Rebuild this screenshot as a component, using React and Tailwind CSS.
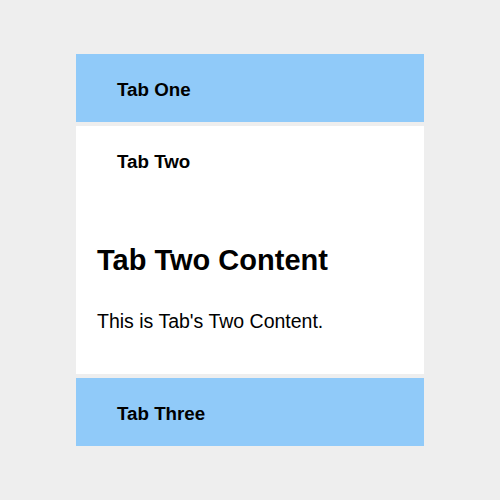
import { useState } from 'react';

const TABS = [
  { id: 'one', label: 'Tab One', title: 'Tab One Content', body: "This is Tab's One Content." },
  { id: 'two', label: 'Tab Two', title: 'Tab Two Content', body: "This is Tab's Two Content." },
  { id: 'three', label: 'Tab Three', title: 'Tab Three Content', body: "This is Tab's Three Content." },
];

function Tab({ tab, open, onToggle }) {
  if (!open) {
    return (
      <button
        type="button"
        onClick={onToggle}
        className="block w-full text-left bg-[#90caf9] pl-[41px] pt-[26px] pb-[22px] text-[18.75px] leading-[20px] font-bold text-black"
      >
        {tab.label}
      </button>
    );
  }

  return (
    <div className="bg-white">
      <button
        type="button"
        onClick={onToggle}
        className="block w-full text-left pl-[41px] pt-[26px] pb-[22px] text-[18.75px] leading-[20px] font-bold text-black"
      >
        {tab.label}
      </button>
      <div className="px-[21px] pt-[50px] pb-[43px]">
        <h2 className="text-[29px] leading-[32px] font-bold text-black">{tab.title}</h2>
        <p className="mt-[35px] text-[19.5px] leading-[20px] text-black">{tab.body}</p>
      </div>
    </div>
  );
}

export default function App() {
  const [active, setActive] = useState('two');

  return (
    <div
      className="h-[500px] flex items-center justify-center bg-[#eeeeee]"
      style={{ fontFamily: '"Liberation Sans", Arial, sans-serif' }}
    >
      <div className="w-[348px] flex flex-col gap-1">
        {TABS.map((tab) => (
          <Tab
            key={tab.id}
            tab={tab}
            open={active === tab.id}
            onToggle={() => setActive(active === tab.id ? null : tab.id)}
          />
        ))}
      </div>
    </div>
  );
}
